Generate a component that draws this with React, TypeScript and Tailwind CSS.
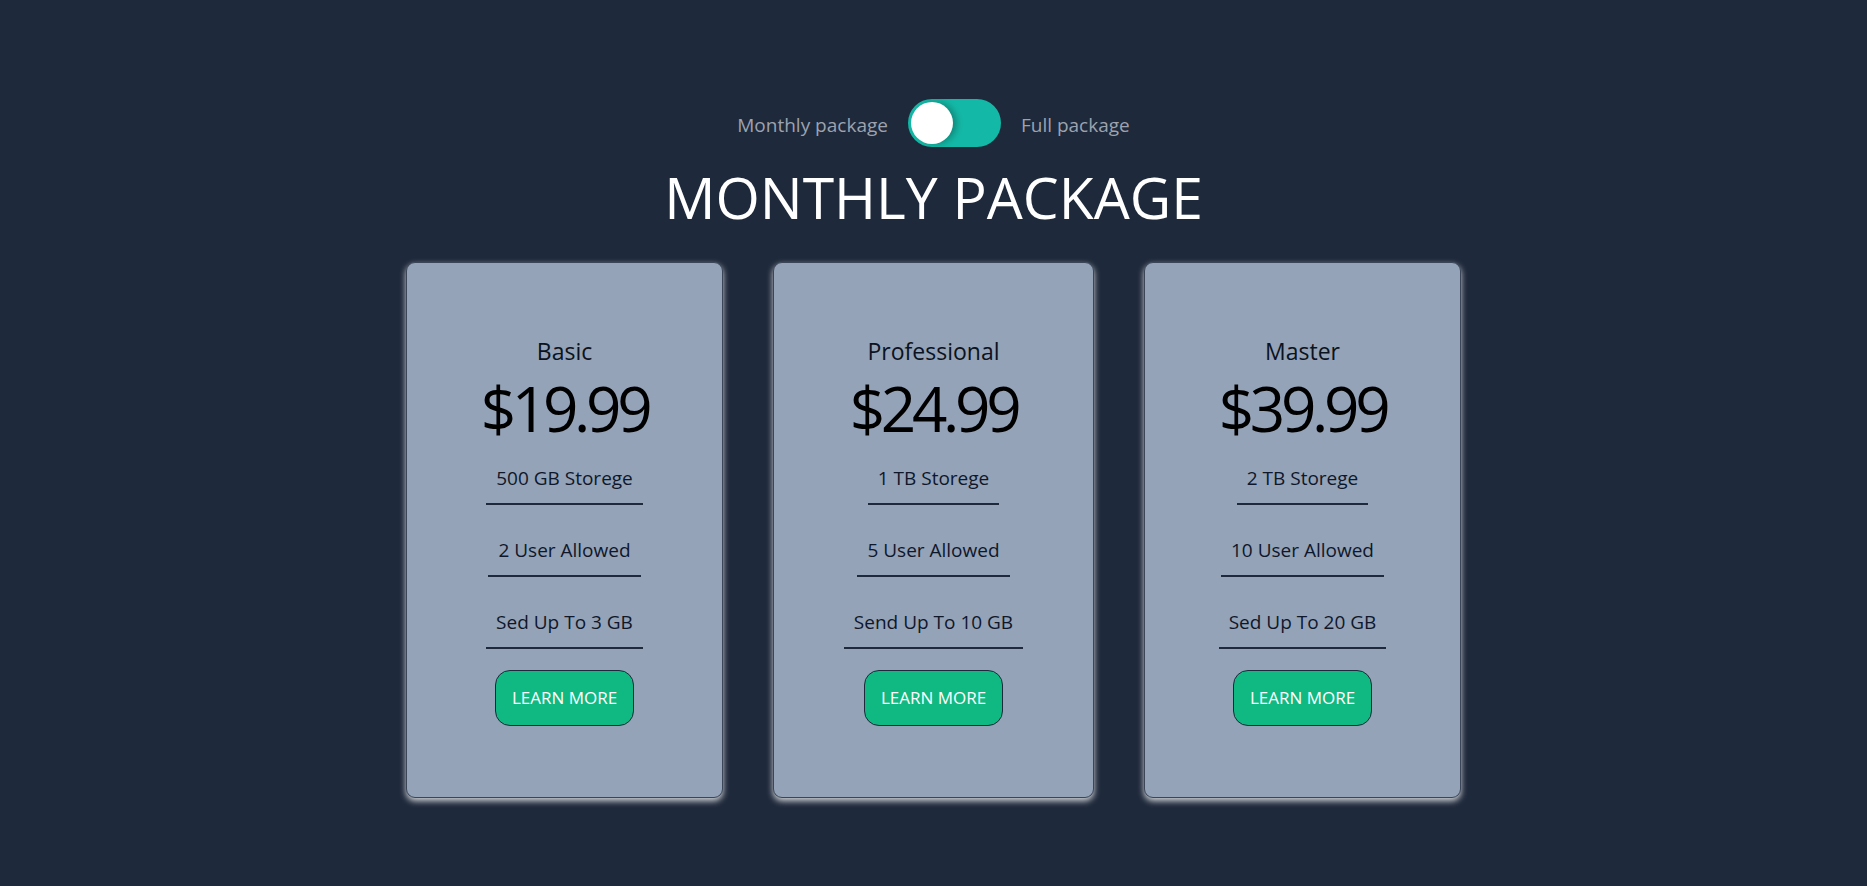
import { useState } from 'react'

type Plan = {
  name: string
  price: string
  features: string[]
  width: string
}

const PLANS: Plan[] = [
  {
    name: 'Basic',
    price: '$19.99',
    features: ['500 GB Storege', '2 User Allowed', 'Sed Up To 3 GB'],
    width: 'w-[317px]',
  },
  {
    name: 'Professional',
    price: '$24.99',
    features: ['1 TB Storege', '5 User Allowed', 'Send Up To 10 GB'],
    width: 'w-[321px]',
  },
  {
    name: 'Master',
    price: '$39.99',
    features: ['2 TB Storege', '10 User Allowed', 'Sed Up To 20 GB'],
    width: 'w-[317px]',
  },
]

function PlanCard({ plan }: { plan: Plan }) {
  return (
    <div
      className={`${plan.width} flex flex-col items-center rounded-[9px] border border-[#3b4658] bg-[#94a3b8] pt-[72px] pb-[71px] shadow-[0_3px_6px_rgba(255,255,255,0.8)]`}
    >
      <h2 className="text-[23px] leading-[32px] text-[#0b1220]">{plan.name}</h2>
      <p className="mt-[6px] text-[62px] leading-[70px] tracking-[-0.07em] text-black">{plan.price}</p>
      <ul className="mt-[22px] flex flex-col items-center gap-8">
        {plan.features.map((f) => (
          <li
            key={f}
            className="border-b-2 border-[#1e293b] px-[10px] pb-3 text-[19px] leading-[26px] text-[#0f172a]"
          >
            {f}
          </li>
        ))}
      </ul>
      <button className="mt-[21px] h-[56px] rounded-[15px] border border-[#1e293b] bg-[#10b981] px-4 text-[17px] text-white">
        LEARN MORE
      </button>
    </div>
  )
}

export default function App() {
  const [full, setFull] = useState(false)

  return (
    <div className="min-h-screen bg-[#1e293b] pt-[99px] font-['Open_Sans',sans-serif]">
      <div className="flex items-center justify-center gap-5">
        <span className="pt-[5px] text-[19px] text-[#9ca3af]">Monthly package</span>
        <button
          onClick={() => setFull(!full)}
          className={`flex h-[48px] w-[93px] items-center rounded-full bg-[#14b8a6] px-[3px] ${full ? 'justify-end' : 'justify-start'}`}
        >
          <span className="size-[42px] rounded-full bg-white shadow-[4px_0_6px_rgba(0,0,0,0.25)]" />
        </button>
        <span className="pt-[5px] text-[19px] text-[#9ca3af]">Full package</span>
      </div>

      <h1 className="mt-[22px] text-center text-[57px] leading-[57px] text-white">
        {full ? 'FULL PACKAGE' : 'MONTHLY PACKAGE'}
      </h1>

      <div className="mt-[36px] flex justify-center gap-[50px]">
        {PLANS.map((p) => (
          <PlanCard key={p.name} plan={p} />
        ))}
      </div>
    </div>
  )
}
